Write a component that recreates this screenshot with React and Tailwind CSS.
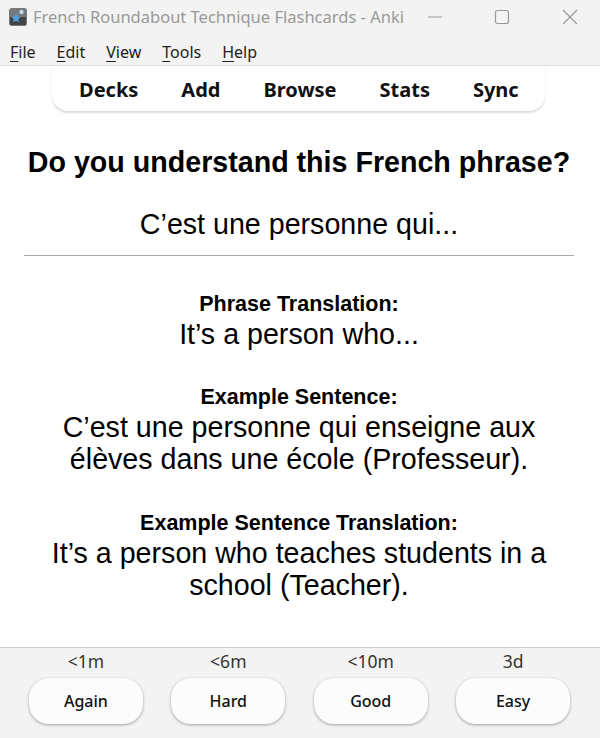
const ui = { fontFamily: '"Noto Sans", sans-serif' };

function Btn({ time, label }) {
  return (
    <div className="flex w-[142.4px] flex-col items-center">
      <div className="h-[30px] pt-[1px] text-[17.5px] leading-[24px] text-[#333]">{time}</div>
      <div className="flex h-[46px] w-[114px] items-center justify-center rounded-[20px] bg-[#fcfcfc] text-[16px] font-medium text-[#111] shadow-[0_1px_3px_rgba(0,0,0,0.35)]">
        {label}
      </div>
    </div>
  );
}

function U({ c, rest }) {
  return (
    <span>
      <span className="underline underline-offset-[3px]">{c}</span>
      {rest}
    </span>
  );
}

export default function App() {
  return (
    <div className="flex h-[738px] w-[600px] flex-col overflow-hidden bg-white">
      <div className="bg-[#f3f3f3] font-['Noto_Sans',sans-serif]">
        <div className="flex h-[37px] items-center pb-[3px]">
          <svg className="ml-[9px] h-[18px] w-[18px]" viewBox="0 0 18 18">
            <rect x="0" y="0" width="18" height="18" rx="3" fill="#777" />
            <rect x="1" y="9" width="16" height="8" fill="#444" />
            <path d="M7 5.5l1.4 3 3.2.4-2.3 2.2.6 3.2L7 12.8l-2.9 1.5.6-3.2L2.4 8.9l3.2-.4z" fill="#4aa3e8" />
            <circle cx="12.5" cy="4" r="2.2" fill="#b8d6ee" />
          </svg>
          <span className="ml-[6px] text-[16.5px] text-[#999]">French Roundabout Technique Flashcards - Anki</span>
          <div className="ml-[23px] flex items-center">
            <svg className="h-[16px] w-[16px]" viewBox="0 0 16 16"><path d="M1 8h14" stroke="#999" strokeWidth="1" /></svg>
            <svg className="ml-[51px] h-[16px] w-[16px]" viewBox="0 0 16 16"><rect x="1.5" y="1.5" width="13" height="13" rx="2" fill="none" stroke="#999" strokeWidth="1.2" /></svg>
            <svg className="ml-[52px] h-[16px] w-[16px]" viewBox="0 0 16 16"><path d="M1 1l14 14M15 1L1 15" stroke="#999" strokeWidth="1.1" /></svg>
          </div>
        </div>
        <div className="flex h-[29px] gap-[21px] border-b border-[#ddd] pl-[10px] pt-[1px] text-[16px] leading-[28px] text-[#222]">
          <U c="F" rest="ile" />
          <U c="E" rest="dit" />
          <U c="V" rest="iew" />
          <U c="T" rest="ools" />
          <U c="H" rest="elp" />
        </div>
      </div>

      <div className="flex" style={ui}>
        <div className="ml-[52px] flex h-[45px] w-[493px] items-center gap-[43px] rounded-b-[16px] bg-white pl-[27px] pt-[2px] text-[20px] font-bold text-[#111] shadow-[0_2px_2px_rgba(0,0,0,0.14)]">
          <span>Decks</span><span>Add</span><span>Browse</span><span>Stats</span><span>Sync</span>
        </div>
      </div>

      <div className="flex-1 pl-[24px] pr-[26px] text-center font-['Liberation_Sans',sans-serif] text-black">
        <div className="mt-[34px] whitespace-nowrap text-[28.64px] font-bold leading-[34px]">Do you understand this French phrase?</div>
        <div className="mt-[29px] text-[28.64px] leading-[32px]">C’est une personne qui...</div>
        <div className="mt-[15px] h-px w-[550px] bg-[#aaa]" />
        <div className="mt-[34px] text-[21.5px] font-bold leading-[28px]">Phrase Translation:</div>
        <div className="text-[28.64px] leading-[32px]">It’s a person who...</div>
        <div className="mt-[33px] text-[21.5px] font-bold leading-[28px]">Example Sentence:</div>
        <div className="text-[28.64px] leading-[32px]">C’est une personne qui enseigne aux<br />élèves dans une école (Professeur).</div>
        <div className="mt-[34px] text-[21.5px] font-bold leading-[28px]">Example Sentence Translation:</div>
        <div className="text-[28.64px] leading-[32px]">It’s a person who teaches students in a<br />school (Teacher).</div>
      </div>

      <div className="flex h-[91px] justify-center border-t border-[#ccc] bg-[#f3f3f3] pr-[1px] font-['Noto_Sans',sans-serif]">
        <Btn time="<1m" label="Again" />
        <Btn time="<6m" label="Hard" />
        <Btn time="<10m" label="Good" />
        <Btn time="3d" label="Easy" />
      </div>
    </div>
  );
}
